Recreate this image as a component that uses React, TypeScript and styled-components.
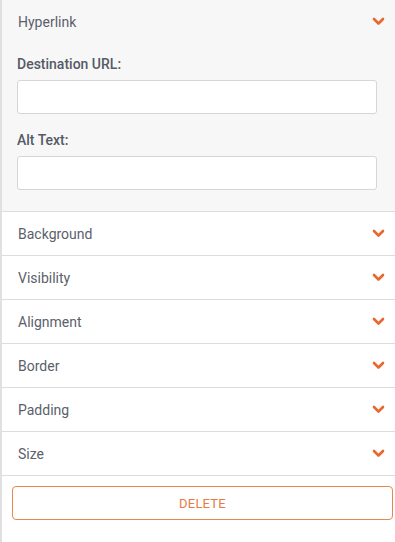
import styled, { createGlobalStyle } from 'styled-components';

const GlobalStyle = createGlobalStyle`
  html, body {
    margin: 0;
    padding: 0;
    background: #ffffff;
    font-family: Roboto, "Liberation Sans", sans-serif;
  }
`;

const sections = ['Background', 'Visibility', 'Alignment', 'Border', 'Padding', 'Size'];

const Chevron = () => (
  <svg width="13" height="9" viewBox="0 0 13 9">
    <path d="M2 2 L6.5 6.5 L11 2" fill="none" stroke="#e8672c" strokeWidth="2.6" strokeLinecap="round" strokeLinejoin="round" />
  </svg>
);

const App = () => {
  return (
    <>
      <GlobalStyle />
      <Panel>
        <Section open>
          <Header>
            <Title>Hyperlink</Title>
            <Chevron />
          </Header>
          <Body>
            <Field>
              <Label>Destination URL:</Label>
              <Input type="text" />
            </Field>
            <Field>
              <Label>Alt Text:</Label>
              <Input type="text" />
            </Field>
          </Body>
        </Section>
        {sections.map((name) => (
          <Section key={name}>
            <Header>
              <Title>{name}</Title>
              <Chevron />
            </Header>
          </Section>
        ))}
        <Footer>
          <DeleteButton>DELETE</DeleteButton>
        </Footer>
      </Panel>
    </>
  );
};

export default App;

const Panel = styled.div`
  width: 393px;
  height: 542px;
  border-left: 2px solid #e0e0e0;
  background: #ffffff;
  display: flex;
  flex-direction: column;
`;

const Section = styled.div<{ open?: boolean }>`
  background: ${(p) => (p.open ? '#f7f7f7' : '#ffffff')};
  border-bottom: 1px solid #dcdcdc;
`;

const Header = styled.div`
  height: 43px;
  display: flex;
  align-items: center;
  justify-content: space-between;
  padding: 0 10px 0 16px;
`;

const Title = styled.span`
  font-size: 14px;
  color: #5b5f6a;
`;

const Body = styled.div`
  display: flex;
  flex-direction: column;
  gap: 18px;
  padding: 13px 18px 21px 15px;
`;

const Field = styled.div`
  display: flex;
  flex-direction: column;
  gap: 8px;
`;

const Label = styled.label`
  font-size: 14px;
  font-weight: 500;
  color: #555a66;
  line-height: 16px;
`;

const Input = styled.input`
  box-sizing: border-box;
  height: 34px;
  width: 100%;
  border: 1px solid #d6d6d6;
  border-radius: 3px;
  background: #ffffff;
  outline: none;
`;

const Footer = styled.div`
  padding: 10px 2px 0 10px;
`;

const DeleteButton = styled.button`
  box-sizing: border-box;
  width: 100%;
  height: 34px;
  border: 1px solid #e8864e;
  border-radius: 4px;
  background: #ffffff;
  color: #e57b45;
  font-family: Roboto, "Liberation Sans", sans-serif;
  font-size: 13px;
  letter-spacing: 0.2px;
  cursor: pointer;
`;
